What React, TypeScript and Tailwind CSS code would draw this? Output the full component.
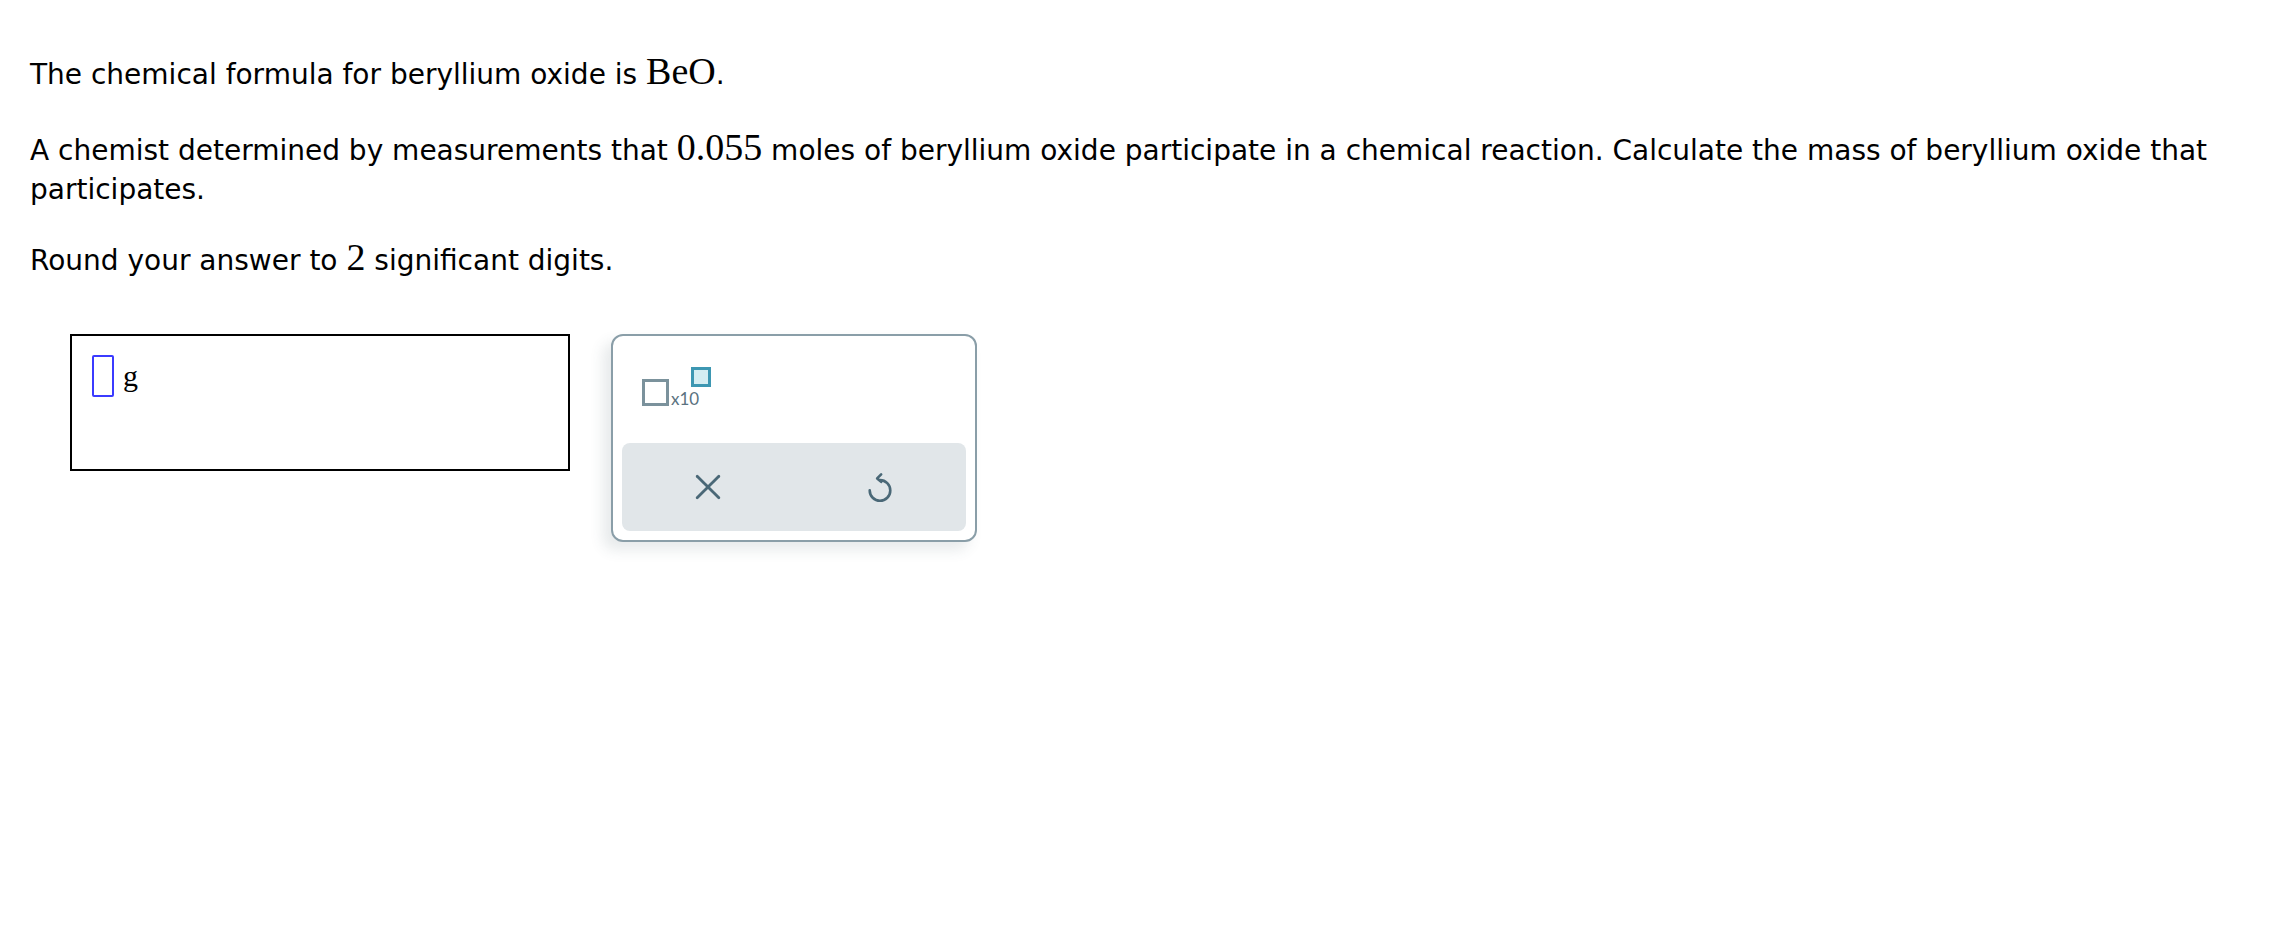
import React from "react";

function M({ children }: { children: React.ReactNode }) {
  return (
    <span className="font-['Liberation_Serif','Times_New_Roman',serif] text-[38px] leading-[26px]">
      {children}
    </span>
  );
}

function UndoIcon() {
  return (
    <svg width="28" height="32" viewBox="0 0 24 28" fill="none" stroke="#4a6877" strokeWidth="2.3" strokeLinecap="round" strokeLinejoin="round">
      <path d="M12 8a9 9 0 1 1-9 9" />
      <path d="M13 3 L9.5 6.5 L13 9.5" />
    </svg>
  );
}

function CloseIcon() {
  return (
    <svg width="26" height="26" viewBox="0 0 24 24" fill="none" stroke="#4a6877" strokeWidth="2.6" strokeLinecap="round">
      <path d="M2 2 L22 22" />
      <path d="M22 2 L2 22" />
    </svg>
  );
}

export default function App() {
  return (
    <div className="min-h-screen bg-white px-[30px] pt-[55px] font-['DejaVu_Sans','Verdana',sans-serif] text-[28px] leading-[39px] text-black">
      <p>
        The chemical formula for beryllium oxide is <M>BeO</M>.
      </p>
      <p className="mt-[37px]">
        A chemist determined by measurements that <M>0.055</M> moles of beryllium oxide participate in a chemical reaction. Calculate the mass of beryllium oxide that participates.
      </p>
      <p className="mt-[32px]">
        Round your answer to <M>2</M> significant digits.
      </p>

      <div className="mt-[54px] ml-[40px] flex items-start gap-[41px]">
        <div className="w-[500px] h-[137px] border-2 border-black pl-[20px] pt-[19px]">
          <div className="flex items-end gap-[9px]">
            <div className="w-[22px] h-[42px] border-2 border-[#3b3bff] rounded-[2px]" />
            <span className="font-['Liberation_Serif','Times_New_Roman',serif] text-[30px] leading-[30px] mb-[6px]">g</span>
          </div>
        </div>

        <div className="w-[366px] h-[208px] border-2 border-[#8a9ea8] rounded-[12px] bg-white shadow-[-8px_8px_14px_rgba(60,80,90,0.12)] p-[9px] flex flex-col">
          <div className="flex-1 pl-[20px] pt-[22px]">
            <div className="flex items-start">
              <div className="w-[27px] h-[27px] border-[3px] border-[#7b929c] mt-[12px]" />
              <span className="mt-[23px] ml-[2px] font-['Lato','Open_Sans',sans-serif] text-[17px] leading-none text-[#5a7280]">x10</span>
              <div className="w-[20px] h-[20px] border-[3px] border-[#3d97b2] bg-[#d4edf2] ml-[-8px]" />
            </div>
          </div>
          <div className="h-[88px] rounded-[8px] bg-[#e1e6e9] flex">
            <div className="flex-1 flex items-center justify-center">
              <CloseIcon />
            </div>
            <div className="flex-1 flex items-center justify-center">
              <UndoIcon />
            </div>
          </div>
        </div>
      </div>
    </div>
  );
}
